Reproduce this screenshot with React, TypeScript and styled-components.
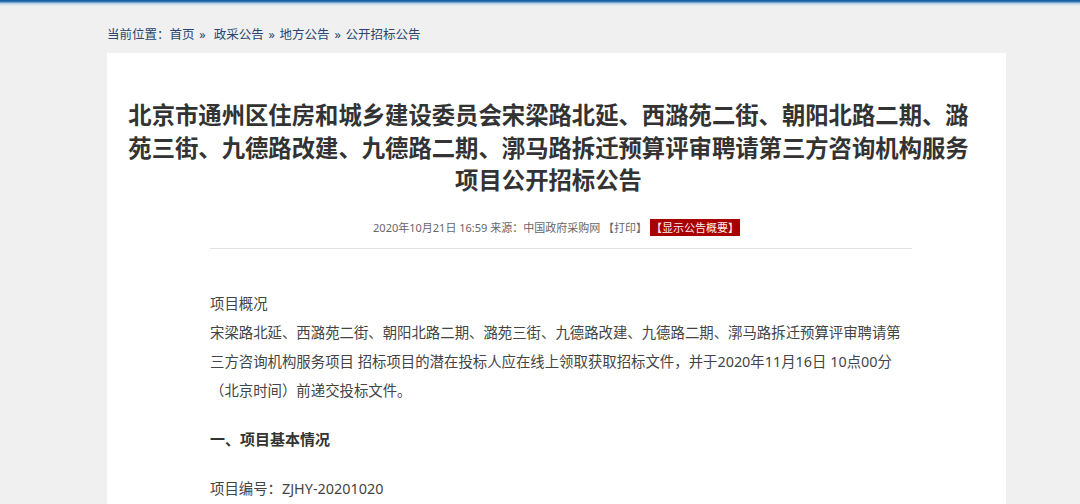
import styled, { createGlobalStyle } from "styled-components";

const GlobalStyle = createGlobalStyle`
  html, body {
    margin: 0;
    padding: 0;
    background: #f0f0f0;
    font-family: "Noto Sans", "Noto Sans CJK SC", sans-serif;
  }
`;

export default function App() {
  return (
    <>
      <GlobalStyle />
      <TopBar />
      <Breadcrumb>
        当前位置：<Crumb>首页</Crumb> <Sep>»</Sep>&nbsp; <Crumb>政采公告</Crumb>{" "}
        <Sep>»</Sep> <Crumb>地方公告</Crumb> <Sep>»</Sep>{" "}
        <Crumb>公开招标公告</Crumb>
      </Breadcrumb>

      <Card>
        <Title>
          北京市通州区住房和城乡建设委员会宋梁路北延、西潞苑二街、朝阳北路二期、潞苑三街、九德路改建、九德路二期、漷马路拆迁预算评审聘请第三方咨询机构服务项目公开招标公告
        </Title>

        <Meta>
          2020年10月21日 16:59 来源：中国政府采购网 【打印】 <Badge>【显示公告概要】</Badge>
        </Meta>

        <Content>
          <Divider />
          <Paragraph>
            项目概况
            <br />
            宋梁路北延、西潞苑二街、朝阳北路二期、潞苑三街、九德路改建、九德路二期、漷马路拆迁预算评审聘请第
            <br />
            三方咨询机构服务项目 招标项目的潜在投标人应在线上领取获取招标文件，并于2020年11月16日 10点00分
            <br />
            （北京时间）前递交投标文件。
          </Paragraph>
          <Heading>一、项目基本情况</Heading>
          <Paragraph>项目编号：ZJHY-20201020</Paragraph>
        </Content>
      </Card>
    </>
  );
}

const TopBar = styled.div`
  height: 6px;
  background: linear-gradient(
    to bottom,
    #0d5296 0px,
    #3b7fc0 2px,
    #a9c8e0 3px,
    #dbe6ee 5px,
    #f0f0f0 6px
  );
`;

const Breadcrumb = styled.div`
  height: 47px;
  padding-left: 107px;
  box-sizing: border-box;
  padding-top: 20px;
  font-size: 12.5px;
  line-height: 18px;
  color: #2a4670;
`;

const Crumb = styled.span`
  color: #2a4670;
`;

const Sep = styled.span`
  display: inline-block;
  margin: 0 1.5px;
`;

const Card = styled.div`
  margin-left: 107px;
  width: 899px;
  min-height: 460px;
  background: #ffffff;
  padding: 46px 0 20px;
  box-sizing: border-box;
`;

const Title = styled.h1`
  margin: 0;
  padding: 0 36px 0 20px;
  font-size: 23.35px;
  line-height: 32.5px;
  font-weight: 700;
  color: #333333;
  text-align: center;
`;

const Meta = styled.div`
  margin-top: 21px;
  text-align: center;
  font-size: 11px;
  line-height: 20px;
  color: #666666;
`;

const Badge = styled.span`
  background: #a80000;
  color: #fff0f0;
  padding: 1px 1px;
`;

const Content = styled.div`
  margin-left: 103px;
  width: 702px;
`;

const Divider = styled.div`
  margin-top: 10px;
  height: 1px;
  background: #e2e2e2;
`;

const Paragraph = styled.p`
  margin: 40px 0 0;
  font-size: 14.4px;
  line-height: 29px;
  color: #444444;
`;

const Heading = styled.p`
  margin: 20px 0 0;
  font-size: 15px;
  line-height: 29px;
  font-weight: 700;
  color: #333333;
  & + ${Paragraph} {
    margin-top: 20px;
  }
`;
